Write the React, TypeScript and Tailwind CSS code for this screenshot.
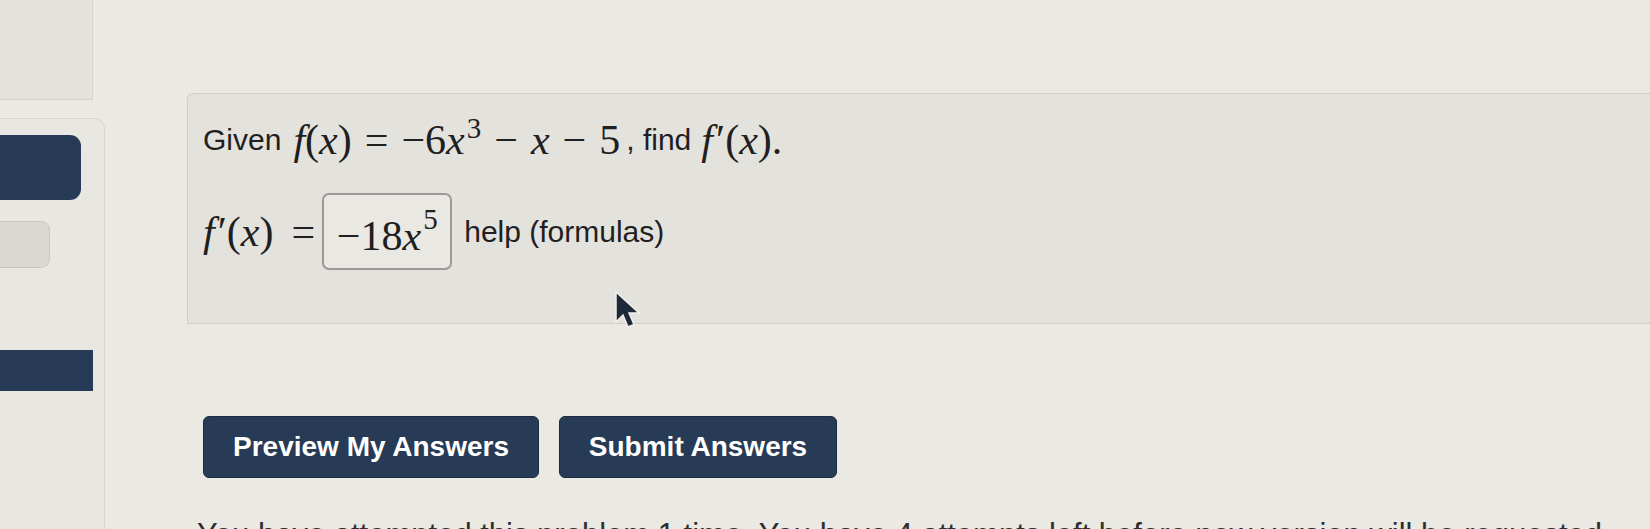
import React from "react";

const sans = { fontFamily: '"Liberation Sans", Arial, sans-serif' };
const serif = "font-['Liberation_Serif',serif]";

function Mi({ children }: { children: React.ReactNode }) {
  return <span className="italic">{children}</span>;
}

function Sup({ children }: { children: React.ReactNode }) {
  return <span className="relative -top-[16px] ml-[2px] text-[29px]">{children}</span>;
}

function Op({ children }: { children: React.ReactNode }) {
  return <span className="mx-[13px]">{children}</span>;
}

function Cursor() {
  return (
    <svg className="absolute left-[614px] top-[291px]" width="28" height="38" viewBox="0 0 28 38">
      <path d="M2 1 L2 31 L9 24 L14 36 L20 33.5 L15 22 L25 22 Z" fill="#1e2939" stroke="#f1f0eb" strokeWidth="1.5" />
    </svg>
  );
}

export default function App() {
  return (
    <div className="relative flex h-[529px] w-full overflow-hidden bg-[#eae9e4] text-[#1f1f1f]" style={sans}>
      {/* left nav */}
      <div className="flex w-[105px] shrink-0 flex-col">
        <div className="h-[100px] w-[93px] shrink-0 border-r border-b border-[#d6d4cf] bg-[#e3e2dd]" />
        <div className="mt-[18px] flex flex-1 flex-col rounded-tr-[10px] border-t border-r border-[#d9d7d2] bg-[#e8e7e2]">
          <div className="mt-[16px] h-[65px] w-[81px] shrink-0 rounded-r-[11px] bg-[#283b56]" />
          <div className="mt-[21px] h-[47px] w-[50px] shrink-0 rounded-r-[9px] border border-l-0 border-[#c9c7c2] bg-[#d9d8d3]" />
          <div className="mt-[82px] h-[41px] w-[93px] shrink-0 bg-[#283b56]" />
        </div>
      </div>

      {/* main */}
      <div className="flex flex-1 flex-col pl-[82px]">
        <div className="mt-[93px] h-[231px] shrink-0 rounded-tl-[6px] border border-r-0 border-[#d1cfca] bg-[#e3e2dd] pl-[15px] pt-[24px]">
          <div className="flex h-[44px] items-center text-[30px] leading-none">
            <span>Given</span>
            <span className={`${serif} ml-[12px] whitespace-nowrap text-[42px]`}>
              <Mi>f</Mi>(<Mi>x</Mi>)<Op>=</Op>−6<Mi>x</Mi>
              <Sup>3</Sup>
              <Op>−</Op>
              <Mi>x</Mi>
              <Op>−</Op>5
            </span>
            <span className="ml-[6px]">, find</span>
            <span className={`${serif} ml-[10px] text-[42px]`}>
              <Mi>f</Mi>
              <span className="ml-[3px]">′</span>(<Mi>x</Mi>).
            </span>
          </div>
          <div className="mt-[31px] flex items-center text-[30px] leading-none">
            <span className={`${serif} whitespace-nowrap text-[42px]`}>
              <Mi>f</Mi>
              <span className="ml-[3px]">′</span>(<Mi>x</Mi>)<span className="ml-[18px]">=</span>
            </span>
            <div
              className={`${serif} ml-[7px] flex h-[77px] w-[130px] items-center justify-center rounded-[7px] border-2 border-[#9b9a96] bg-[#e9e8e3] pt-[8px] text-[42px] leading-none`}
            >
              −18<Mi>x</Mi>
              <Sup>5</Sup>
            </div>
            <span className="ml-[12px]">help (formulas)</span>
          </div>
        </div>

        <div className="mt-[92px] flex shrink-0 gap-[20px] pl-[16px]">
          <button className="h-[62px] w-[336px] rounded-[6px] border border-[#1c2c42] bg-[#283b56] text-[28px] font-bold text-white">
            Preview My Answers
          </button>
          <button className="h-[62px] w-[278px] rounded-[6px] border border-[#1c2c42] bg-[#283b56] text-[28px] font-bold text-white">
            Submit Answers
          </button>
        </div>

        <p className="mt-[41px] ml-[10px] shrink-0 whitespace-nowrap text-[31px] leading-none text-[#2e2e2e]">
          You have attempted this problem 1 time. You have 4 attempts left before new version will be requested.
        </p>
      </div>

      <Cursor />
    </div>
  );
}
